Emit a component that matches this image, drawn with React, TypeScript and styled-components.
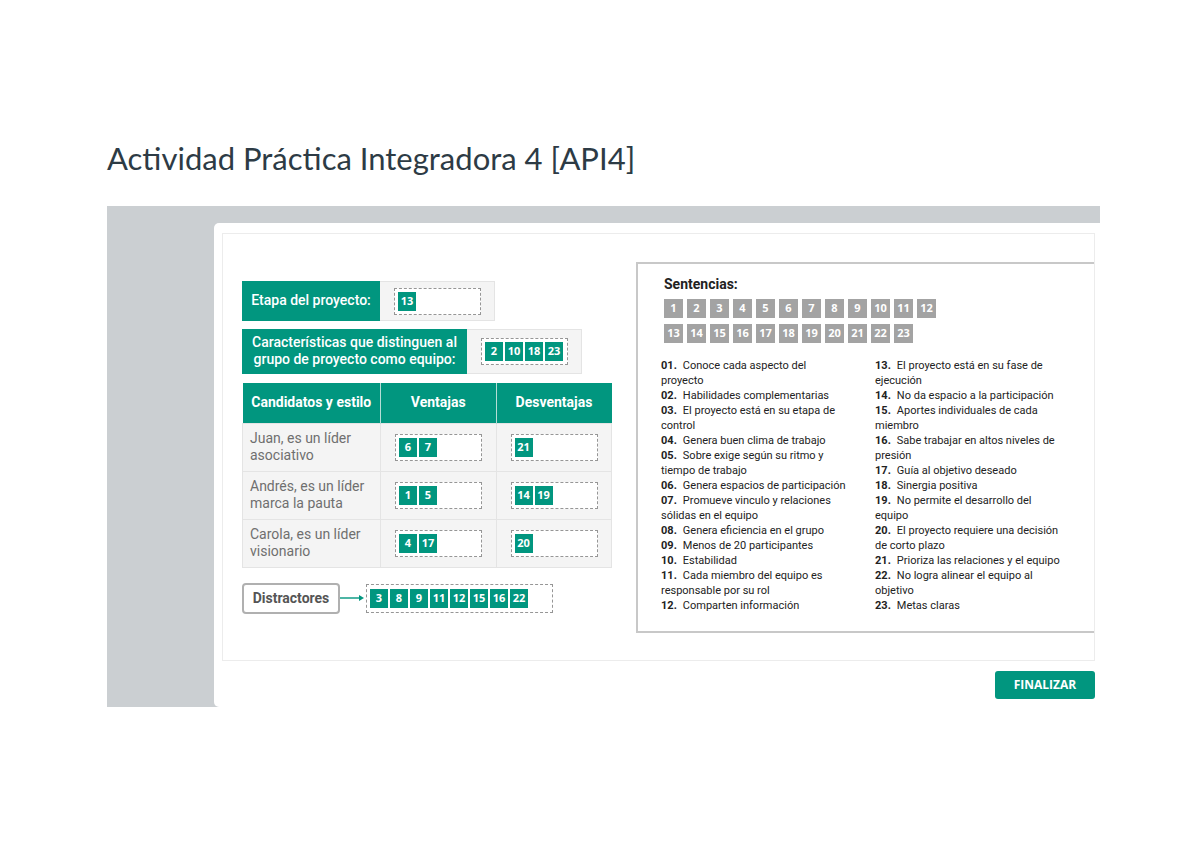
import React from "react";
import styled, { createGlobalStyle } from "styled-components";

const green = "#01967f";
const pale = "#f4f4f4";
const line = "#e4e4e4";

const GlobalStyle = createGlobalStyle`
  * { box-sizing: border-box; }
  body {
    margin: 0;
    background: #fff;
    font-family: Roboto, "Liberation Sans", sans-serif;
    color: #2d3b45;
  }
`;

const Page = styled.main`
  padding: 138px 100px 142px 107px;
`;

const Title = styled.h1`
  margin: 0 0 28px;
  font: 400 31px/40px Lato, "Open Sans", sans-serif;
  color: #2d3b45;
`;

const Stage = styled.section`
  padding: 17px 0 0 107px;
  background: #cbcfd2;
`;

const Card = styled.div`
  display: flex;
  flex-direction: column;
  padding: 10px 5px 8px 8px;
  background: #fff;
  border-radius: 5px 0 0 5px;
`;

const Board = styled.div`
  display: flex;
  align-items: flex-start;
  gap: 24px;
  padding: 28px 0 27px 19px;
  border: 1px solid #ececec;
`;

const Answers = styled.div`
  flex: none;
  width: 370px;
  padding-top: 19px;
`;

const Field = styled.div<{ $height: number; $gap: number }>`
  display: flex;
  width: fit-content;
  min-height: ${(p) => p.$height}px;
  margin-bottom: ${(p) => p.$gap}px;
`;

const FieldLabel = styled.div<{ $width: number }>`
  display: flex;
  align-items: center;
  justify-content: center;
  width: ${(p) => p.$width}px;
  padding-bottom: 2px;
  background: ${green};
  color: #fff;
  font-weight: 500;
  font-size: 14px;
  line-height: 17px;
  text-align: center;
`;

const FieldValue = styled.div`
  display: flex;
  align-items: center;
  padding: 0 13px 0 14px;
  background: ${pale};
  border: 1px solid ${line};
  border-left: 0;
`;

const Slot = styled.ul<{ $width: number; $clear?: boolean }>`
  display: flex;
  align-items: center;
  gap: 2px;
  width: ${(p) => p.$width}px;
  height: ${(p) => (p.$clear ? 29 : 27)}px;
  margin: 0;
  padding: 0 3px;
  list-style: none;
  background: #fff;
  border: 1px dashed #969696;
`;

const Chip = styled.li`
  display: flex;
  align-items: center;
  justify-content: center;
  width: 18px;
  height: 19px;
  padding-bottom: 1px;
  background: ${green};
  color: #fff;
  font: 700 11px/18px "Open Sans", "Noto Sans", sans-serif;
`;

const Table = styled.table`
  width: 100%;
  table-layout: fixed;
  border-collapse: collapse;
  margin-bottom: 15px;
`;

const HeadCell = styled.th<{ $width?: number }>`
  width: ${(p) => (p.$width ? `${p.$width}px` : "auto")};
  height: 40px;
  padding: 0;
  background: ${green};
  color: #fff;
  font-weight: 700;
  font-size: 14px;
  line-height: 17px;
  & + & { border-left: 1px solid #b5ddd6; }
`;

const NameCell = styled.th`
  height: 48px;
  padding: 0 0 0 7px;
  background: ${pale};
  border: 1px solid ${line};
  color: #6f6f6f;
  font-weight: 400;
  font-size: 14px;
  line-height: 17px;
  text-align: left;
`;

const SlotCell = styled.td`
  padding: 0 14px;
  background: ${pale};
  border: 1px solid ${line};
`;

const Extras = styled.div`
  display: flex;
  align-items: center;
`;

const ExtrasLabel = styled.div`
  width: 98px;
  height: 31px;
  border: 2px solid #b0b0b0;
  border-radius: 4px;
  color: #555;
  font-weight: 700;
  font-size: 14px;
  line-height: 26px;
  text-align: center;
`;

const Arrow = styled.svg`
  display: block;
  width: 26px;
  height: 8px;
`;

const Panel = styled.section`
  flex: 1;
  min-width: 0;
  padding: 12px 0 18px 23px;
  border: 2px solid #c8c8c8;
  border-width: 2px 0 2px 2px;
`;

const PanelTitle = styled.h2`
  margin: 0 0 7px;
  padding-left: 3px;
  font: 700 14px/16px Roboto, sans-serif;
  color: #222;
`;

const Numbers = styled.ul`
  display: grid;
  grid-template-columns: repeat(12, 19px);
  gap: 6px 4px;
  margin: 0 0 15px;
  padding: 0 0 0 3px;
  list-style: none;
`;

const NumberTile = styled(Chip)`
  width: 19px;
  background: #a3a3a3;
`;

const Columns = styled.div`
  display: grid;
  grid-template-columns: 214px minmax(0, 1fr);
`;

const Sentences = styled.ul`
  margin: 0;
  padding: 0;
  list-style: none;
  font-size: 11px;
  line-height: 15px;
  color: #222;
`;

const Line = styled.div`
  display: flex;
  gap: 6px;
`;

const Finish = styled.button`
  align-self: flex-end;
  width: 100px;
  height: 28px;
  margin-top: 10px;
  padding: 0;
  border: 0;
  border-radius: 3px;
  background: ${green};
  color: #fff;
  font: 700 12px/28px "Open Sans", "Noto Sans", sans-serif;
`;

const candidates = [
  { name: ["Juan, es un líder", "asociativo"], pros: [6, 7], cons: [21] },
  { name: ["Andrés, es un líder", "marca la pauta"], pros: [1, 5], cons: [14, 19] },
  { name: ["Carola, es un líder", "visionario"], pros: [4, 17], cons: [20] },
];

const sentences = [
  ["Conoce cada aspecto del", "proyecto"],
  ["Habilidades complementarias"],
  ["El proyecto está en su etapa de", "control"],
  ["Genera buen clima de trabajo"],
  ["Sobre exige según su ritmo y", "tiempo de trabajo"],
  ["Genera espacios de participación"],
  ["Promueve vinculo y relaciones", "sólidas en el equipo"],
  ["Genera eficiencia en el grupo"],
  ["Menos de 20 participantes"],
  ["Estabilidad"],
  ["Cada miembro del equipo es", "responsable por su rol"],
  ["Comparten información"],
  ["El proyecto está en su fase de", "ejecución"],
  ["No da espacio a la participación"],
  ["Aportes individuales de cada", "miembro"],
  ["Sabe trabajar en altos niveles de", "presión"],
  ["Guía al objetivo deseado"],
  ["Sinergia positiva"],
  ["No permite el desarrollo del", "equipo"],
  ["El proyecto requiere una decisión", "de corto plazo"],
  ["Prioriza las relaciones y el equipo"],
  ["No logra alinear el equipo al", "objetivo"],
  ["Metas claras"],
];

function DropSlot({ items, width = 87, clear }: { items: number[]; width?: number; clear?: boolean }) {
  return (
    <Slot $width={width} $clear={clear}>
      {items.map((n) => (
        <Chip key={n}>{n}</Chip>
      ))}
    </Slot>
  );
}

function SentenceList({ from, to }: { from: number; to: number }) {
  return (
    <Sentences>
      {sentences.slice(from - 1, to).map(([first, rest], i) => (
        <li key={first}>
          <Line>
            <b>{String(from + i).padStart(2, "0")}.</b>
            <span>{first}</span>
          </Line>
          {rest && <Line>{rest}</Line>}
        </li>
      ))}
    </Sentences>
  );
}

export default function App() {
  return (
    <>
      <GlobalStyle />
      <Page>
        <Title>Actividad Práctica Integradora 4 [API4]</Title>
        <Stage>
          <Card>
            <Board>
              <Answers>
                <Field $height={40} $gap={8}>
                  <FieldLabel $width={138}>Etapa del proyecto:</FieldLabel>
                  <FieldValue>
                    <DropSlot items={[13]} />
                  </FieldValue>
                </Field>
                <Field $height={45} $gap={9}>
                  <FieldLabel $width={225}>
                    Características que distinguen al
                    <br />
                    grupo de proyecto como equipo:
                  </FieldLabel>
                  <FieldValue>
                    <DropSlot items={[2, 10, 18, 23]} />
                  </FieldValue>
                </Field>
                <Table>
                  <thead>
                    <tr>
                      <HeadCell $width={138} scope="col">Candidatos y estilo</HeadCell>
                      <HeadCell scope="col">Ventajas</HeadCell>
                      <HeadCell scope="col">Desventajas</HeadCell>
                    </tr>
                  </thead>
                  <tbody>
                    {candidates.map((c) => (
                      <tr key={c.name[0]}>
                        <NameCell scope="row">
                          {c.name[0]}
                          <br />
                          {c.name[1]}
                        </NameCell>
                        <SlotCell>
                          <DropSlot items={c.pros} />
                        </SlotCell>
                        <SlotCell>
                          <DropSlot items={c.cons} />
                        </SlotCell>
                      </tr>
                    ))}
                  </tbody>
                </Table>
                <Extras>
                  <ExtrasLabel>Distractores</ExtrasLabel>
                  <Arrow viewBox="0 0 26 8" aria-hidden="true">
                    <path d="M0 4H20" stroke={green} strokeWidth="1.4" />
                    <path d="M19 1L24 4L19 7Z" fill={green} />
                  </Arrow>
                  <DropSlot items={[3, 8, 9, 11, 12, 15, 16, 22]} width={187} clear />
                </Extras>
              </Answers>
              <Panel>
                <PanelTitle>Sentencias:</PanelTitle>
                <Numbers>
                  {sentences.map(([first], i) => (
                    <NumberTile key={first}>{i + 1}</NumberTile>
                  ))}
                </Numbers>
                <Columns>
                  <SentenceList from={1} to={12} />
                  <SentenceList from={13} to={23} />
                </Columns>
              </Panel>
            </Board>
            <Finish type="button">FINALIZAR</Finish>
          </Card>
        </Stage>
      </Page>
    </>
  );
}
